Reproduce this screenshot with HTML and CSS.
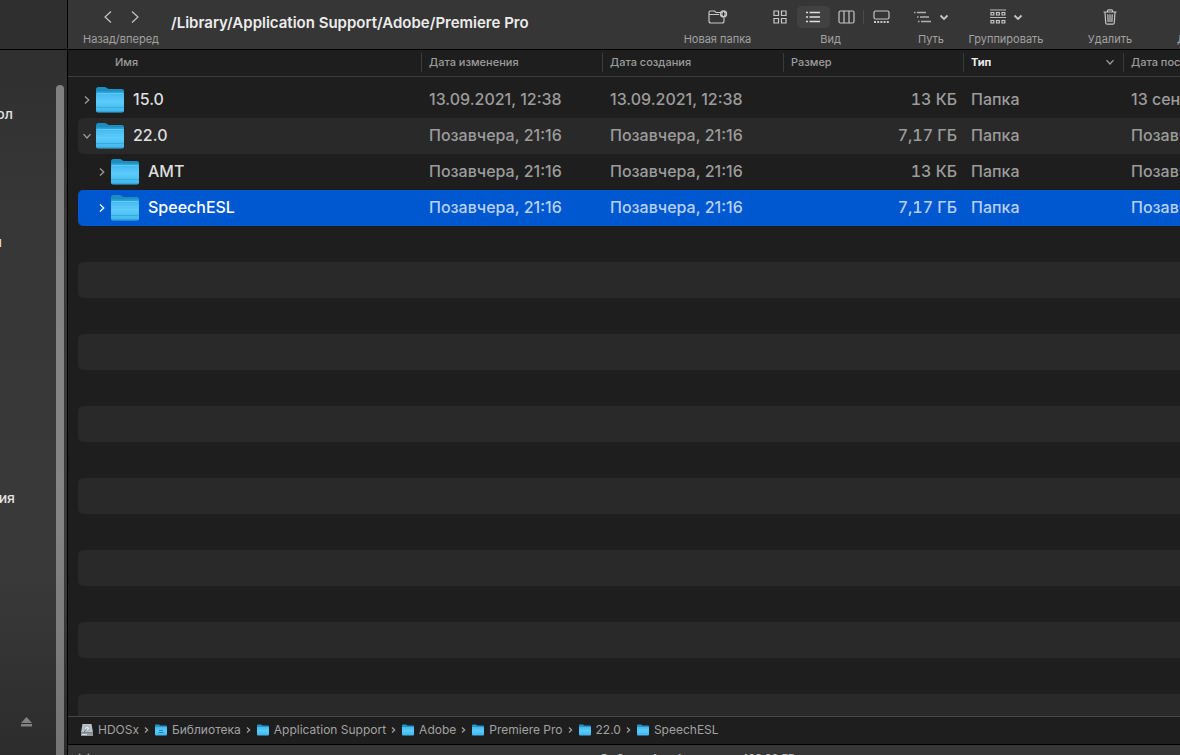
FILE: index.html
```
<!DOCTYPE html>
<html lang="ru">
<head>
<meta charset="utf-8">
<title>Premiere Pro</title>
<link rel="stylesheet" href="styles.css">
</head>
<body>
<svg class="defs" aria-hidden="true">
  <defs>
    <linearGradient id="front" x1="0" y1="0" x2="0" y2="1"><stop offset="0" stop-color="#45b8ee"/><stop offset=".45" stop-color="#5bcbfb"/><stop offset="1" stop-color="#3fb4ea"/></linearGradient>
    <symbol id="folder" viewBox="0 0 30 28">
      <path fill="#1c8fc0" d="M1 3.500Q1 1 3.500 1H9.500Q11 1 12 2L13.500 3H27Q29 3 29 5V12H1Z"/>
      <path fill="#2da3d6" d="M1 5.500H29V9H1Z"/>
      <path fill="url(#front)" d="M1 8Q1 7 2.500 7H27.500Q29 7 29 8V24.500Q29 26.500 27 26.500H3Q1 26.500 1 24.500Z"/>
      <path stroke="#259bcd" d="M1 21.500H29M1 25.500H29" opacity=".5"/>
      <path stroke="#79d7ff" d="M2 7.500H28" opacity=".5"/>
    </symbol>
    <symbol id="mini" viewBox="0 0 14 12">
      <path fill="#2095c6" d="M1 1.500Q1 .5 2 .5H5L6.500 1.500H12Q13 1.500 13 2.500V6H1Z"/>
      <path fill="url(#front)" d="M1 3H13V10.500Q13 11.500 12 11.500H2Q1 11.500 1 10.500Z"/>
    </symbol>
    <symbol id="right" viewBox="0 0 10 10"><path class="stroke" d="M3 1.500 6.800 5 3 8.500"/></symbol>
    <symbol id="down" viewBox="0 0 10 10"><path class="stroke" d="M1.500 3.200 5 7 8.500 3.200"/></symbol>
    <symbol id="crumb" viewBox="0 0 5 8"><path class="stroke" d="M1 1.500 3.700 4 1 6.500"/></symbol>
  </defs>
</svg>
<div class="window">
  <aside class="sidebar">
    <div class="sidebar-top"></div>
    <nav class="sidebar-body" aria-label="Места">
      <a class="place place-desktop" href="#">Рабочий стол</a>
      <a class="place place-images" href="#">Фильмы</a>
      <a class="place place-library" href="#">Мультимедия</a>
      <button class="eject" type="button" aria-label="Извлечь"><svg width="11" height="10" viewBox="0 0 11 10"><path fill="#828282" d="M5.500 0 11 6H0ZM0 7H11V9.500H0Z"/></svg></button>
    </nav>
    <div class="scroll-thumb"></div>
  </aside>
  <main class="main">
    <header class="toolbar">
      <div class="tool nav">
        <div class="icons">
          <button type="button" aria-label="Назад"><svg width="12" height="16" viewBox="0 0 12 16"><path class="stroke" d="M9 2.500 3 8l6 5.500"/></svg></button>
          <button type="button" aria-label="Вперед"><svg width="12" height="16" viewBox="0 0 12 16"><path class="stroke" d="M4 2.500 10 8l-6 5.500"/></svg></button>
        </div>
        <span class="label">Назад/вперед</span>
      </div>
      <h1 class="title">/Library/Application Support/Adobe/Premiere Pro</h1>
      <div class="tool new-folder">
        <div class="icons"><button type="button" aria-label="Новая папка"><svg width="20" height="16" viewBox="0 0 20 16"><path class="stroke" d="M12 3.500H8L6.500 2H2.500Q1 2 1 3.500V12Q1 14 3 14H14Q16 14 16 12V9M1 5.500H11"/><circle cx="15.500" cy="5" r="3.700" fill="#c6c6c6"/><path stroke="#363636" stroke-width="1.200" d="M15.500 3v4M13.500 5h4"/></svg></button></div>
        <span class="label">Новая папка</span>
      </div>
      <div class="tool view">
        <div class="icons">
          <button type="button" aria-label="Значки"><svg width="14" height="14" viewBox="0 0 14 14"><path class="stroke" d="M1 1h4.500v4.500H1ZM8.500 1H13v4.500H8.500ZM1 8.500h4.500V13H1ZM8.500 8.500H13V13H8.500Z"/></svg></button>
          <button class="selected" type="button" aria-label="Список" aria-pressed="true"><svg width="16" height="12" viewBox="0 0 16 12"><path stroke="#e0e0e0" stroke-width="1.500" d="M1 1.500h2M4.500 1.500H15M1 6h2M4.500 6H15M1 10.500h2M4.500 10.500H15"/></svg></button>
          <button type="button" aria-label="Колонки"><svg width="17" height="14" viewBox="0 0 17 14"><path class="stroke" d="M2.500 1h12Q16 1 16 2.500v9Q16 13 14.500 13h-12Q1 13 1 11.500v-9Q1 1 2.500 1ZM6 1v12M11 1v12"/></svg></button>
          <i class="divider"></i>
          <button type="button" aria-label="Галерея"><svg width="17" height="14" viewBox="0 0 17 14"><rect class="stroke" x="1" y="1" width="15" height="8" rx="1.500"/><path stroke="#c6c6c6" stroke-width="2" stroke-dasharray="2 1.200" d="M1 12h15"/></svg></button>
        </div>
        <span class="label">Вид</span>
      </div>
      <div class="tool path">
        <div class="icons"><button type="button" aria-label="Путь"><svg width="18" height="12" viewBox="0 0 18 12"><path stroke="#b0b0b0" stroke-width="1.300" d="M0 1.500h1.500M3 1.500h9M3 6h1.500M6 6h9M4 10.500h1.500M7 10.500h10"/></svg><svg class="bold" width="10" height="10" viewBox="0 0 10 10"><path d="M1.500 3.500 5 7 8.500 3.500"/></svg></button></div>
        <span class="label">Путь</span>
      </div>
      <div class="tool group">
        <div class="icons"><button type="button" aria-label="Группировать"><svg width="16" height="16" viewBox="0 0 16 16"><path stroke="#b8b8b8" stroke-width="1.200" d="M0 1h16M0 8.500h16"/><path class="stroke" d="M1 3.500h2.800v2.500H1ZM6.500 3.500h2.800v2.500H6.500ZM12 3.500h2.800v2.500H12ZM1 11.500h2.800V14H1ZM6.500 11.500h2.800V14H6.500ZM12 11.500h2.800V14H12Z"/></svg><svg class="bold" width="10" height="10" viewBox="0 0 10 10"><path d="M1.500 3.500 5 7 8.500 3.500"/></svg></button></div>
        <span class="label">Группировать</span>
      </div>
      <div class="tool trash">
        <div class="icons"><button type="button" aria-label="Удалить"><svg width="14" height="16" viewBox="0 0 14 16"><path class="stroke" d="M.5 3h13M4.500 3V1.800Q4.500.8 5.500.8h3Q9.500.8 9.500 1.800V3M2 3l.7 10.700Q2.800 15.200 4.200 15.200h5.600q1.400 0 1.500-1.500L12 3M4.800 5.200l.3 7.800M7 5.200V13M9.200 5.200 8.900 13"/></svg></button></div>
        <span class="label">Удалить</span>
      </div>
      <div class="tool action"><div class="icons"></div><span class="label">Действие</span></div>
    </header>

    <section class="list">
      <table>
        <colgroup><col class="c-name"><col class="c-date"><col class="c-date"><col class="c-size"><col class="c-kind"><col></colgroup>
        <thead>
          <tr><th>Имя</th><th>Дата изменения</th><th>Дата создания</th><th>Размер</th><th class="sorted"><div>Тип <svg width="10" height="10"><use href="#down"/></svg></div></th><th>Дата последнего открытия</th></tr>
        </thead>
        <tbody>
          <tr><td><div class="name"><svg class="twist" width="10" height="10"><use href="#right"/></svg><svg width="30" height="28"><use href="#folder"/></svg><span>15.0</span></div></td><td>13.09.2021, 12:38</td><td>13.09.2021, 12:38</td><td>13 КБ</td><td>Папка</td><td>13 сентября 2021</td></tr>
          <tr><td><div class="name"><svg class="twist" width="10" height="10"><use href="#down"/></svg><svg width="30" height="28"><use href="#folder"/></svg><span>22.0</span></div></td><td>Позавчера, 21:16</td><td>Позавчера, 21:16</td><td>7,17 ГБ</td><td>Папка</td><td>Позавчера, 21:16</td></tr>
          <tr><td><div class="name nested"><svg class="twist" width="10" height="10"><use href="#right"/></svg><svg width="30" height="28"><use href="#folder"/></svg><span>AMT</span></div></td><td>Позавчера, 21:16</td><td>Позавчера, 21:16</td><td>13 КБ</td><td>Папка</td><td>Позавчера, 21:16</td></tr>
          <tr class="current"><td><div class="name nested"><svg class="twist" width="10" height="10"><use href="#right"/></svg><svg width="30" height="28"><use href="#folder"/></svg><span>SpeechESL</span></div></td><td>Позавчера, 21:16</td><td>Позавчера, 21:16</td><td>7,17 ГБ</td><td>Папка</td><td>Позавчера, 21:16</td></tr>
          <tr><td colspan="6"></td></tr><tr><td colspan="6"></td></tr><tr><td colspan="6"></td></tr><tr><td colspan="6"></td></tr>
          <tr><td colspan="6"></td></tr><tr><td colspan="6"></td></tr><tr><td colspan="6"></td></tr><tr><td colspan="6"></td></tr>
          <tr><td colspan="6"></td></tr><tr><td colspan="6"></td></tr><tr><td colspan="6"></td></tr><tr><td colspan="6"></td></tr>
          <tr><td colspan="6"></td></tr><tr><td colspan="6"></td></tr>
        </tbody>
      </table>
    </section>

    <nav class="pathbar" aria-label="Путь к папке">
      <a href="#"><svg width="14" height="12" viewBox="0 0 14 12"><path fill="#b9c3c9" d="M2.500 0h9L13 8.500H1Z"/><path fill="#8f9aa1" d="M1 8.500h12V12H1Z"/><circle cx="7" cy="4.500" r="2.600" fill="#dfe7eb" stroke="#98a5ad"/><path stroke="#6f7a80" d="M7 4.500 4 8"/><path stroke="#d6dde1" d="M2 10.500h5"/></svg>HDOSx</a>
      <svg width="5" height="8"><use href="#crumb"/></svg>
      <a href="#"><svg width="14" height="12" viewBox="0 0 14 12"><use href="#mini" width="14" height="12"/><path fill="none" stroke="#1f86b5" d="M4.500 8.500h5M5 6.500h4"/></svg>Библиотека</a>
      <svg width="5" height="8"><use href="#crumb"/></svg>
      <a href="#"><svg width="14" height="12"><use href="#mini"/></svg>Application Support</a>
      <svg width="5" height="8"><use href="#crumb"/></svg>
      <a href="#"><svg width="14" height="12"><use href="#mini"/></svg>Adobe</a>
      <svg width="5" height="8"><use href="#crumb"/></svg>
      <a href="#"><svg width="14" height="12"><use href="#mini"/></svg>Premiere Pro</a>
      <svg width="5" height="8"><use href="#crumb"/></svg>
      <a href="#"><svg width="14" height="12"><use href="#mini"/></svg>22.0</a>
      <svg width="5" height="8"><use href="#crumb"/></svg>
      <a href="#"><svg width="14" height="12"><use href="#mini"/></svg>SpeechESL</a>
    </nav>
    <footer class="status"><svg width="12" height="12" viewBox="0 0 12 12"><path class="stroke" d="M1 1l10 10M11 1 1 11"/></svg><span>Выбрано 1 из 4; доступно 108,33 ГБ</span></footer>
  </main>
</div>
</body>
</html>
```
FILE: styles.css
```
* { box-sizing: border-box; }
body {
  margin: 0;
  height: 100vh;
  overflow: hidden;
  background: #1e1e1e;
  color: #9c9c9c;
  font-family: Inter, "Liberation Sans", sans-serif;
}
svg { display: block; flex: none; }
button {
  display: flex;
  align-items: center;
  justify-content: center;
  padding: 0;
  border: 0;
  background: none;
  color: inherit;
}
a { color: inherit; text-decoration: none; }
.defs { position: absolute; width: 0; height: 0; }
.stroke { fill: none; stroke: currentColor; stroke-width: 1.2; }
.bold { fill: none; stroke: currentColor; stroke-width: 1.8; }
.window { display: flex; height: 100%; }

.sidebar {
  position: relative;
  display: flex;
  flex: none;
  flex-direction: column;
  width: 68px;
  border-right: 1px solid #000;
  background: #323232;
}
.sidebar-top { height: 50px; border-bottom: 1px solid #000; background: #2f2f2f; }
.sidebar-body {
  display: flex;
  flex: 1;
  flex-direction: column;
  align-items: flex-start;
  background: linear-gradient(#2f2f2f, #363636 20%, #393939 60%, #393939 75%, #2c2c2c);
}
.place {
  display: flex;
  justify-content: flex-end;
  color: #e4e4e4;
  font-size: 14px;
  font-weight: 500;
  line-height: 20px;
  white-space: nowrap;
}
.place-desktop { width: 13px; margin-top: 54px; }
.place-images { width: 2px; margin-top: 108px; }
.place-library { width: 15px; margin-top: 236px; }
.eject { margin: auto 0 28px 21px; }
.scroll-thumb {
  position: absolute;
  top: 85px;
  right: 3px;
  bottom: 0;
  width: 8px;
  border-radius: 4px 4px 0 0;
  background: linear-gradient(#808080, #858585 60%, #747474);
}

.main { display: flex; flex: 1; flex-direction: column; min-width: 0; }
.toolbar {
  display: flex;
  flex: none;
  gap: 12px;
  height: 50px;
  padding: 6px 0 0 15px;
  overflow: hidden;
  border-bottom: 1px solid #000;
  background: #363636;
}
.tool { display: flex; flex: none; flex-direction: column; align-items: center; gap: 4px; }
.icons { display: flex; align-items: center; justify-content: center; height: 22px; color: #c6c6c6; }
.label { color: #a2a2a2; font-size: 11px; line-height: 14px; white-space: nowrap; }
.nav { width: 76px; }
.nav .icons { gap: 14px; }
.title {
  flex: none;
  width: 500px;
  margin: 0;
  color: #ececec;
  font-size: 15px;
  font-weight: 600;
  line-height: 34px;
  white-space: nowrap;
}
.new-folder { width: 69px; }
.view { width: 133px; }
.view button { width: 33px; height: 22px; }
.view .selected { border-radius: 5px; background: #414141; }
.divider { width: 1px; height: 14px; margin-right: 1px; background: #4a4a4a; }
.path { width: 44px; }
.group { width: 82px; }
.path button, .group button { gap: 7px; }
.trash { width: 102px; }
.action { align-items: flex-start; padding-left: 4px; }

.list {
  flex: 1;
  min-height: 0;
  padding-left: 10px;
  overflow: hidden;
  background: linear-gradient(#3e3e3e, #3e3e3e) 0 26px / 100% 1px no-repeat #1e1e1e;
}
table { width: 100%; min-width: 1224px; table-layout: fixed; border-collapse: separate; border-spacing: 0; }
.c-name { width: 343px; }
.c-date { width: 181px; }
.c-size { width: 180px; }
.c-kind { width: 160px; }
th {
  height: 26px;
  padding: 0 8px 2px;
  background: linear-gradient(#3a3a3a, #3a3a3a) 0 3px / 1px 19px no-repeat;
  font-size: 11px;
  font-weight: 500;
  line-height: 14px;
  text-align: left;
  white-space: nowrap;
}
th:first-child { padding-left: 37px; background: none; }
.sorted { color: #ececec; font-weight: 700; }
.sorted div { display: flex; align-items: center; justify-content: space-between; }
.sorted svg { color: #a0a0a0; }
tbody::before { content: ""; display: block; height: 6px; }
td {
  height: 36px;
  padding: 0 6px 2px 8px;
  font-size: 16px;
  font-weight: 500;
  line-height: 20px;
  white-space: nowrap;
}
td:nth-child(4) { font-variant-numeric: tabular-nums; text-align: right; }
td:first-child { padding: 0 0 0 4px; border-radius: 5px 0 0 5px; }
tr:nth-child(even) td { background: #292929; }
.current td { color: #b8d1f5; }
tr.current:nth-child(even) td { background: #0058d0; }
.name { display: flex; align-items: center; color: #dedede; }
.name span { margin-left: 8px; padding-bottom: 2px; }
.nested { padding-left: 15px; }
.twist { margin-right: 3px; color: #a0a0a0; }
.current .name, .current .twist { color: #fff; }

.pathbar {
  display: flex;
  flex: none;
  align-items: center;
  gap: 5px;
  height: 28px;
  padding: 0 0 2px 12px;
  border-top: 1px solid #464646;
  color: #a2a2a2;
  font-size: 12px;
  line-height: 16px;
  white-space: nowrap;
}
.pathbar a { display: flex; align-items: center; gap: 4px; }
.status {
  display: flex;
  flex: none;
  height: 11px;
  padding-top: 6px;
  overflow: hidden;
  border-top: 1px solid #000;
  background: #363636;
  color: #b4b4b4;
  font-size: 11px;
  font-weight: 500;
  line-height: 14px;
}
.status svg { margin: 2px 0 0 10px; }
.status span { flex: 1; padding-left: 126px; text-align: center; }
```
